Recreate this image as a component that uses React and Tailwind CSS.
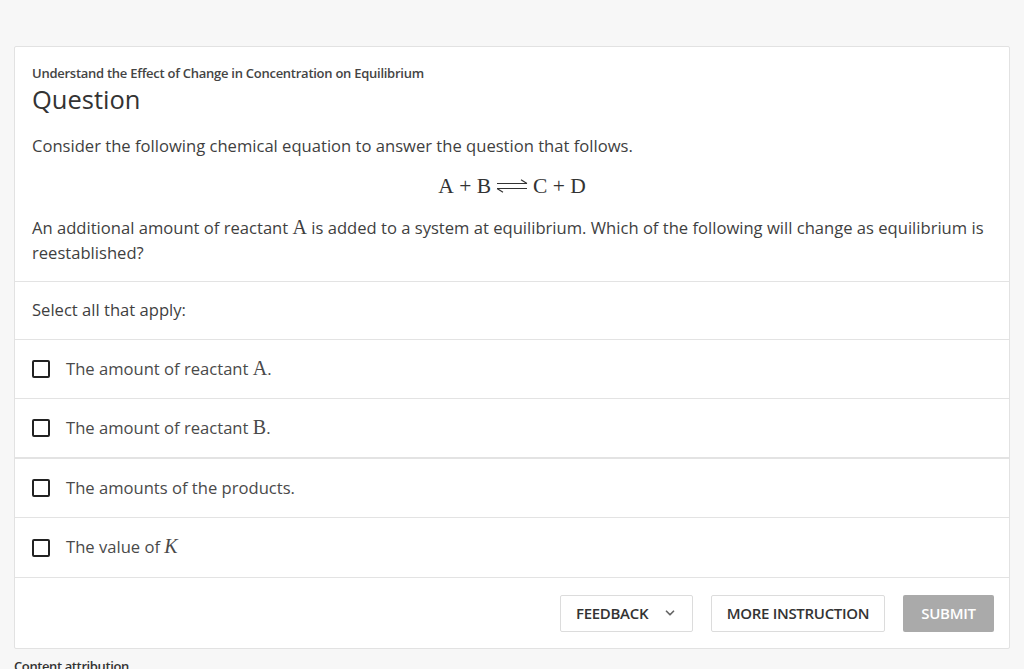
import React from 'react';
import { ChevronDown } from 'lucide-react';

const serif = "font-['Liberation_Serif','DejaVu_Serif',serif]";

const M = ({ children, italic, big }) => (
  <span className={`${serif} ${big ? 'text-[21.5px]' : 'text-[20px]'} leading-[20px] ${italic ? 'italic' : ''}`}>{children}</span>
);

const Harpoons = () => (
  <svg width="32" height="14" viewBox="0 0 32 14" className="mx-[5px] inline-block" fill="none" stroke="#333" strokeWidth="1.2">
    <path d="M1 4.5 H31 M31 4.5 L25 0.8" />
    <path d="M1 9.5 H31 M1 9.5 L7 13.2" />
  </svg>
);

const Checkbox = () => (
  <span className="w-[18px] h-[18px] border-2 border-[#222] rounded-[2px] bg-white shrink-0" />
);

const Option = ({ children, thick, tall }) => (
  <label className={`flex items-center gap-[16px] ${tall ? 'h-[60px]' : 'h-[59px]'} px-[17px] ${thick ? 'border-t-2' : 'border-t'} border-[#e3e3e3] cursor-pointer`}>
    <Checkbox />
    <span className="text-[16.6px] text-[#4a4a4a]">{children}</span>
  </label>
);

export default function App() {
  return (
    <div className="min-h-screen bg-[#f7f7f7] px-[14px] pt-[46px] font-['Open_Sans',sans-serif] text-[#3f3f3f]">
      <div className="bg-white border border-[#e2e2e2] rounded-[2px]">
        <div className="px-[17px] pt-[17px] pb-[16px]">
          <div className="text-[13px] leading-[18px] font-semibold text-[#444] tracking-[-0.02em]">
            Understand the Effect of Change in Concentration on Equilibrium
          </div>
          <h2 className="mt-[1px] text-[25.5px] leading-[32px] text-[#333]">Question</h2>
          <p className="mt-[18px] text-[16.6px] leading-[25px]">
            Consider the following chemical equation to answer the question that follows.
          </p>
          <div className="mt-[14px] h-[28px] flex items-center justify-center text-[#333]">
            <M big>A&nbsp;+&nbsp;B</M>
            <Harpoons />
            <M big>C&nbsp;+&nbsp;D</M>
          </div>
          <p className="mt-[15px] text-[16.6px] leading-[25px]">
            An additional amount of reactant <M>A</M> is added to a system at equilibrium. Which of the following will change as equilibrium is reestablished?
          </p>
        </div>
        <div className="flex items-center h-[58px] px-[17px] border-t border-[#e3e3e3] text-[16.6px]">
          Select all that apply:
        </div>
        <Option>The amount of reactant <M>A</M>.</Option>
        <Option>The amount of reactant <M>B</M>.</Option>
        <Option thick tall>The amounts of the products.</Option>
        <Option tall>The value of <M italic>K</M></Option>
        <div className="flex items-center justify-end gap-[18px] h-[71px] pr-[15px] border-t border-[#e3e3e3]">
          <button className="flex items-center justify-between w-[133px] h-[37px] px-[15px] border border-[#dcdcdc] rounded-[2px] bg-white text-[15px] font-semibold tracking-[-0.02em] text-[#333]">
            FEEDBACK
            <ChevronDown size={14} strokeWidth={3} className="text-[#666]" />
          </button>
          <button className="h-[37px] w-[174px] border border-[#dcdcdc] rounded-[2px] bg-white text-[15px] font-semibold tracking-[-0.02em] text-[#333]">
            MORE INSTRUCTION
          </button>
          <button className="h-[37px] w-[91px] rounded-[2px] bg-[#aaaaaa] text-[15px] font-semibold tracking-[-0.02em] text-white">
            SUBMIT
          </button>
        </div>
      </div>
      <div className="mt-[8px] text-[13px] font-semibold text-[#333] tracking-[-0.03em]">Content attribution</div>
    </div>
  );
}
